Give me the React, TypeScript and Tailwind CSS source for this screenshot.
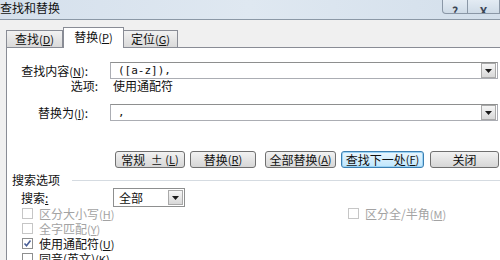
import { ReactNode } from "react";

const Arrow = () => (
  <div className="flex h-[15px] w-[15px] items-center justify-center border border-[#a9a9a9] bg-linear-to-b from-[#f6f6f6] to-[#d8d8d8]">
    <svg width="7" height="4" viewBox="0 0 7 4">
      <path d="M0 0h7L3.5 4z" fill="#1a1a1a" />
    </svg>
  </div>
);

const Key = ({ k }: { k: string }) => (
  <span className="text-[11px] leading-none">
    (<span className="underline">{k}</span>)
  </span>
);

const Combo = ({ value }: { value: string }) => (
  <div className="flex h-[17px] w-[388px] items-center border border-[#abadb3] border-t-[#8e8f8f] bg-white pl-[7px] pr-px">
    <span className="flex-1 font-['DejaVu_Sans_Mono',monospace] text-[11px] leading-none">
      {value}
    </span>
    <Arrow />
  </div>
);

const Btn = ({
  w,
  focus,
  children,
}: {
  w: string;
  focus?: boolean;
  children: ReactNode;
}) => (
  <div
    className={`flex h-[17px] items-center justify-center rounded-[3px] border text-[12px] leading-none ${w} ${
      focus
        ? "border-[#3c7fb1] bg-linear-to-b from-[#eaf6fd] to-[#bee6fd] shadow-[inset_0_0_0_1px_#9bd3f5]"
        : "border-[#707070] bg-linear-to-b from-[#f2f2f2] to-[#d6d6d6]"
    }`}
  >
    {children}
  </div>
);

const Check = ({
  checked,
  disabled,
  children,
}: {
  checked?: boolean;
  disabled?: boolean;
  children: ReactNode;
}) => (
  <div
    className={`flex h-[15px] items-center gap-[6px] overflow-hidden text-[12px] leading-none ${
      disabled ? "text-[#a3a3a3]" : "text-[#111]"
    }`}
  >
    <div
      className={`flex h-[11px] w-[11px] shrink-0 items-center justify-center border bg-white ${
        disabled ? "border-[#c6c6c6]" : "border-[#8e8f8f]"
      }`}
    >
      {checked && (
        <svg width="9" height="9" viewBox="0 0 9 9">
          <path d="M1.5 4.5l2 2.2L7.5 1.5" stroke="#4a5f97" strokeWidth="1.6" fill="none" />
        </svg>
      )}
    </div>
    <span className="leading-[12px]">{children}</span>
  </div>
);

export default function App() {
  return (
    <div className="h-[260px] w-[500px] overflow-hidden bg-[#f0f0f0] font-['Noto_Sans_CJK_SC',sans-serif] text-[#111]">
      {/* title bar */}
      <div className="flex h-[20px] items-start justify-between border-b border-[#8b98a6] bg-linear-to-r from-[#d5e0ec] via-[#dfe8f1] to-[#d3dfeb]">
        <span className="mt-[1px] text-[12px] leading-[14px]">查找和替换</span>
        <div className="flex">
          <div className="flex h-[14px] w-[26px] items-end justify-center overflow-hidden rounded-bl-[4px] border border-t-0 border-[#8a97a6] bg-linear-to-b from-[#e3ebf3] to-[#cfdbe7]">
            <span className="mb-[-4px] text-[12px] font-bold leading-none text-[#3a4655]">?</span>
          </div>
          <div className="flex h-[14px] w-[32px] items-end justify-center overflow-hidden border border-l-0 border-t-0 border-[#8a97a6] bg-linear-to-b from-[#e3ebf3] to-[#cfdbe7]">
            <span className="mb-[-4px] text-[12px] font-bold leading-none text-[#3a4655]">X</span>
          </div>
        </div>
      </div>

      {/* tabs */}
      <div className="flex h-[27px] items-end pl-[6px]">
        <div className="flex h-[17px] w-[57px] items-center justify-center border border-b-0 border-[#898c95] bg-linear-to-b from-[#f2f2f2] to-[#dadada] text-[12px] leading-none">
          查找<Key k="D" />
        </div>
        <div className="relative z-10 mb-[-1px] flex h-[21px] w-[61px] items-center justify-center border border-b-0 border-[#898c95] bg-white pb-[2px] text-[12px] leading-none">
          替换<Key k="P" />
        </div>
        <div className="flex h-[17px] w-[54px] items-center justify-center border border-b-0 border-l-0 border-[#898c95] bg-linear-to-b from-[#f2f2f2] to-[#dadada] text-[12px] leading-none">
          定位<Key k="G" />
        </div>
      </div>

      {/* panel */}
      <div className="ml-[6px] flex h-[240px] flex-col border-l border-t border-[#898c95] bg-white">
        <div className="mt-[14px] flex items-center">
          <div className="w-[81px] text-right text-[12px] leading-none">
            查找内容<Key k="N" />:
          </div>
          <div className="ml-[22px]">
            <Combo value="([a-z])," />
          </div>
        </div>

        <div className="flex h-[14px] items-center text-[12px] leading-none">
          <div className="w-[91px] text-right">选项:</div>
          <div className="ml-[15px]">使用通配符</div>
        </div>

        <div className="mt-[11px] flex items-center">
          <div className="w-[81px] text-right text-[12px] leading-none">
            替换为<Key k="I" />:
          </div>
          <div className="ml-[22px]">
            <Combo value="," />
          </div>
        </div>

        <div className="mt-[30px] flex items-center pl-[108px]">
          <Btn w="w-[70px]">
            常规&nbsp;&nbsp;±&nbsp;<Key k="L" />
          </Btn>
          <div className="ml-[5px]">
            <Btn w="w-[66px]">
              替换<Key k="R" />
            </Btn>
          </div>
          <div className="ml-[9px]">
            <Btn w="w-[71px]">
              全部替换<Key k="A" />
            </Btn>
          </div>
          <div className="ml-[5px]">
            <Btn w="w-[83px]" focus>
              查找下一处<Key k="F" />
            </Btn>
          </div>
          <div className="ml-[6px]">
            <Btn w="w-[69px]">关闭</Btn>
          </div>
        </div>

        <div className="mt-[4px] flex h-[16px] items-center pl-[5px]">
          <span className="text-[12px] leading-none">搜索选项</span>
          <div className="ml-[12px] h-px flex-1 bg-[#d5dbe1]" />
        </div>

        <div className="flex items-center pl-[14px]">
          <div className="w-[92px] text-[12px] leading-none">
            搜索<span className="underline">:</span>
          </div>
          <div className="flex h-[19px] w-[72px] items-center border border-[#8e8f8f] bg-white pl-[5px] pr-px">
            <span className="flex-1 text-[12px] leading-none">全部</span>
            <Arrow />
          </div>
        </div>

        <div className="mt-[-1px] flex flex-col pl-[15px]">
          <div className="flex">
            <div className="w-[326px]">
              <Check disabled>
                区分大小写<Key k="H" />
              </Check>
            </div>
            <Check disabled>
              区分全/半角<Key k="M" />
            </Check>
          </div>
          <Check disabled>
            全字匹配<Key k="Y" />
          </Check>
          <Check checked>
            使用通配符<Key k="U" />
          </Check>
          <Check>
            同音(英文)<Key k="K" />
          </Check>
        </div>
      </div>
    </div>
  );
}
